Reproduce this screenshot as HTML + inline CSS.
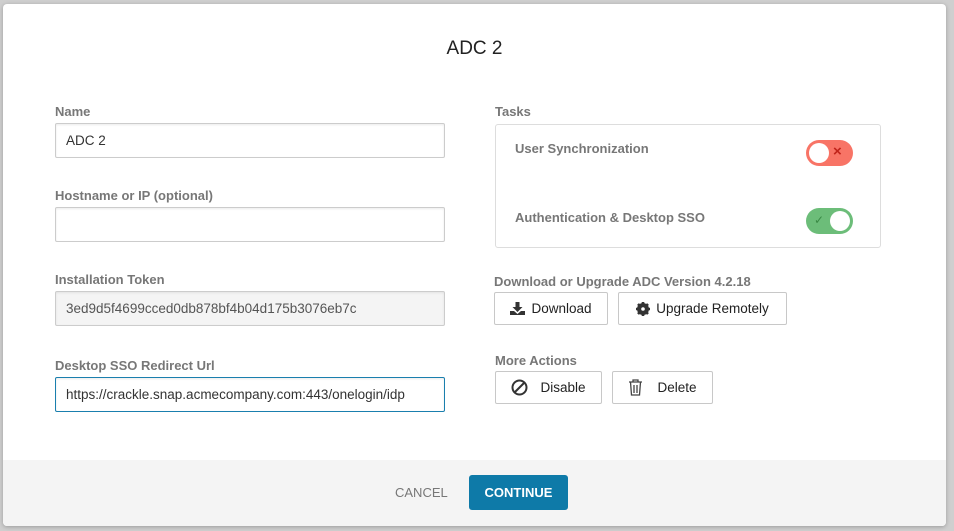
<!DOCTYPE html>
<html><head><style>
*{box-sizing:border-box;margin:0;padding:0}
body{width:954px;height:531px;background:#cfcfcf;font-family:"Liberation Sans",sans-serif;position:relative;overflow:hidden}
.modal{position:absolute;left:3px;top:4px;width:943px;height:522px;background:#fff;border-radius:4px;overflow:hidden;box-shadow:0 1px 4px rgba(0,0,0,.25)}
.t{position:absolute;font-size:13px;color:#777;font-weight:bold}
.in{position:absolute;left:52px;width:390px;height:35px;border:1px solid #ccc;border-radius:2px;font-size:13.5px;color:#333;padding:9px 10px;box-shadow:inset 0 1px 2px rgba(0,0,0,.08)}
.btn{position:absolute;height:33px;border:1px solid #c8c8c8;border-radius:2px;font-size:13.5px;color:#222;display:flex;align-items:center;justify-content:center;gap:6px;background:#fff}
.tog{position:absolute;width:47px;height:26px;border-radius:13px}
.knob{position:absolute;top:3px;width:20px;height:20px;border-radius:50%;background:#fff}
</style></head><body>
<div class="modal">
<div style="position:absolute;top:34px;width:100%;text-align:center;font-size:19px;color:#222">ADC 2</div>
<div class="t" style="left:52px;top:100px">Name</div>
<div class="in" style="top:119px">ADC 2</div>
<div class="t" style="left:52px;top:184px">Hostname or IP (optional)</div>
<div class="in" style="top:203px"></div>
<div class="t" style="left:52px;top:268px">Installation Token</div>
<div class="in" style="top:287px;background:#f4f4f4;color:#555">3ed9d5f4699cced0db878bf4b04d175b3076eb7c</div>
<div class="t" style="left:52px;top:354px">Desktop SSO Redirect Url</div>
<div class="in" style="top:373px;border-color:#1a7fae">https://crackle.snap.acmecompany.com:443/onelogin/idp</div>

<div class="t" style="left:492px;top:100px">Tasks</div>
<div style="position:absolute;left:492px;top:120px;width:386px;height:124px;border:1px solid #ddd;border-radius:3px"></div>
<div class="t" style="left:512px;top:137px">User Synchronization</div>
<div class="tog" style="left:803px;top:136px;background:#f87466"><div class="knob" style="left:3px"></div><span style="position:absolute;left:27px;top:3px;color:#c0241b;font-size:15px;font-weight:bold">×</span></div>
<div class="t" style="left:512px;top:206px">Authentication &amp; Desktop SSO</div>
<div class="tog" style="left:803px;top:204px;background:#6cbd79"><div class="knob" style="left:24px"></div><span style="position:absolute;left:8px;top:5px;color:#3a8a45;font-size:12px">✓</span></div>

<div class="t" style="left:491px;top:270px">Download or Upgrade ADC Version 4.2.18</div>
<div class="btn" style="left:491px;top:288px;width:114px"><svg width="15" height="13" viewBox="0 0 15 13"><path d="M5.5 0h4v5h3l-5 5-5-5h3z" fill="#333"/><path d="M0 9h4l3.5 3 3.5-3h4v4H0z" fill="#333"/></svg>Download</div>
<div class="btn" style="left:615px;top:288px;width:169px"><svg width="14" height="14" viewBox="0 0 14 14"><circle cx="7" cy="7" r="4.5" fill="none" stroke="#333" stroke-width="3"/><g stroke="#333" stroke-width="2.6"><path d="M7 0v14M0 7h14M2 2l10 10M12 2L2 12"/></g><circle cx="7" cy="7" r="1.8" fill="#fff"/></svg>Upgrade Remotely</div>

<div class="t" style="left:492px;top:349px">More Actions</div>
<div class="btn" style="left:492px;top:367px;width:107px;gap:12px"><svg width="17" height="17" viewBox="0 0 17 17"><circle cx="8.5" cy="8.5" r="7" fill="none" stroke="#333" stroke-width="2"/><path d="M4 13L13 4" stroke="#333" stroke-width="2"/></svg>Disable</div>
<div class="btn" style="left:609px;top:367px;width:101px;gap:14px"><svg width="15" height="17" viewBox="0 0 15 17"><path d="M1 3h13M5 3V1h5v2M2.5 3l1 13h8l1-13M6 6v8M9 6v8" fill="none" stroke="#444" stroke-width="1.3"/></svg>Delete</div>

<div style="position:absolute;left:0;top:456px;width:100%;height:66px;background:#f4f4f4"></div>
<div style="position:absolute;left:392px;top:481px;font-size:13px;color:#777">CANCEL</div>
<div style="position:absolute;left:466px;top:471px;width:99px;height:35px;background:#0e7aa8;border-radius:3px;color:#fff;font-size:13px;font-weight:bold;text-align:center;line-height:35px">CONTINUE</div>
</div>
</body></html>
